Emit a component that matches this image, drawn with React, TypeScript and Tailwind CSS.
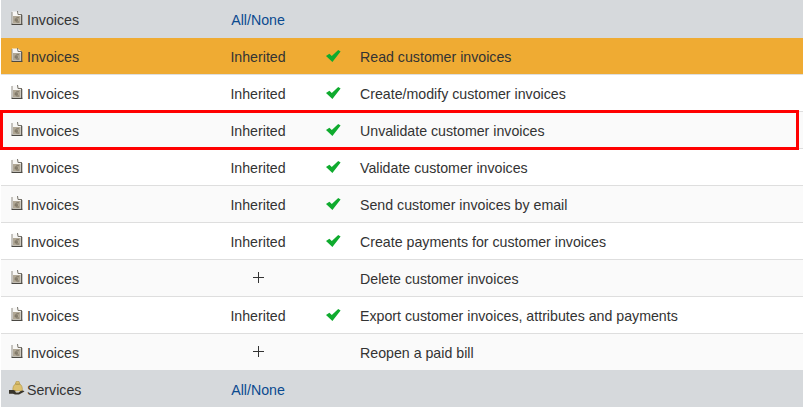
import React from 'react';

const rows = [
  { status: 'Inherited', label: 'Read customer invoices', active: true },
  { status: 'Inherited', label: 'Create/modify customer invoices' },
  { status: 'Inherited', label: 'Unvalidate customer invoices', boxed: true },
  { status: 'Inherited', label: 'Validate customer invoices' },
  { status: 'Inherited', label: 'Send customer invoices by email' },
  { status: 'Inherited', label: 'Create payments for customer invoices' },
  { status: 'Plus', label: 'Delete customer invoices' },
  { status: 'Inherited', label: 'Export customer invoices, attributes and payments' },
  { status: 'Plus', label: 'Reopen a paid bill' },
];

const BillIcon = () => (
  <svg width="12" height="14" viewBox="0 0 12 14" className="mb-[6px] shrink-0">
    <path d="M1 0.5 H7 L10.5 3.5 V13 H1 Z" fill="#f8f7f5" />
    <path d="M1 1 V13" stroke="#8f8c84" strokeWidth="1" />
    <path d="M0.5 13.4 H11.5" stroke="#4a4843" strokeWidth="1.2" />
    <path d="M10.6 4 V13" stroke="#5f5c55" strokeWidth="1.4" />
    <path d="M6.5 0 L7 3.5 H11" fill="none" stroke="#77746c" strokeWidth="1" />
    <rect x="2" y="5" width="7.5" height="7.5" fill="#b0a795" />
    <path d="M8 6.7 H5.9 Q4.9 6.7 4.9 8 V9.8 Q4.9 11 5.9 11 H8 M3.6 8.3 H7 M3.6 9.6 H7" fill="none" stroke="#7d7565" strokeWidth="0.9" />
  </svg>
);

const ServiceIcon = () => (
  <svg width="16" height="14" viewBox="0 0 16 14" className="mb-[4px] -ml-[2px] mr-[-2px] shrink-0">
    <path d="M4 10 C3.4 6.5 4.6 4 6.4 3 L7.2 0.4 H10 L10.8 3 C12.6 4 13.8 6.5 13.2 10 Z" fill="#dcc06e" stroke="#b0923f" strokeWidth="0.6" />
    <path d="M6.4 3.2 H10.8" stroke="#9a8136" strokeWidth="0.7" />
    <path d="M0 9 H4.5 L7 10 L9.5 10.5 L14 9.5 L15.5 10.5 L10 13.6 H6 L4 12.8 H0 Z" fill="#38342b" />
    <path d="M6 10.2 H11.5 L9.5 11.4 H7 Z" fill="#f4f0e0" />
  </svg>
);

const CheckIcon = () => (
  <svg width="15" height="12" viewBox="0 0 15 12" className="mb-[4px]">
    <path d="M0 6 L3.4 3.8 L5.8 6 L12.2 0 L14.6 1.4 L6.4 12 Z" fill="#0fab2e" />
  </svg>
);

const PlusIcon = () => (
  <svg width="11" height="11" viewBox="0 0 11 11" className="mb-[6px]">
    <path d="M5.5 0 V11 M0 5.5 H11" stroke="#333" strokeWidth="1" />
  </svg>
);

const HeaderRow = ({ icon, name, tall }: { icon: React.ReactNode; name: string; tall?: boolean }) => (
  <div className={`flex items-center bg-[#d6d9dc] pl-[10px] pt-[4px] ${tall ? 'h-[38px]' : 'h-[37px]'}`}>
    <div className="flex w-[219px] items-center gap-[4px]">
      {icon}
      <span>{name}</span>
    </div>
    <span className="flex w-[56px] justify-center whitespace-nowrap text-[#0a4a8f]">All/None</span>
  </div>
);

const App = () => {
  return (
    <div className="relative h-[410px] w-[803px] overflow-hidden bg-white pl-px font-['Liberation_Sans',sans-serif] text-[14.2px] text-[#333]">
      <HeaderRow icon={<BillIcon />} name="Invoices" tall />
      {rows.map((row, i) => (
        <div
          key={row.label}
          className={`flex items-center pl-[10px] pt-[4px] ${i === 0 ? 'h-[36px] bg-[#efab33]' : 'h-[37px] border-t border-[#dedede]'} ${i > 0 && i % 2 === 0 ? 'bg-[#fafafa]' : ''}`}
        >
          <div className="flex w-[219px] items-center gap-[4px]">
            <BillIcon />
            <span>Invoices</span>
          </div>
          <span className="flex w-[56px] justify-center whitespace-nowrap">{row.status === 'Plus' ? <PlusIcon /> : 'Inherited'}</span>
          <span className="ml-[40px] flex w-[15px] justify-center">{row.status === 'Plus' ? null : <CheckIcon />}</span>
          <span className="ml-[19px]">{row.label}</span>
          {row.boxed && (
            <div className="absolute left-0 top-[110px] h-[40px] w-[799px] border-[3px] border-[#ff0000]" />
          )}
        </div>
      ))}
      <HeaderRow icon={<ServiceIcon />} name="Services" />
    </div>
  );
};

export default App;
